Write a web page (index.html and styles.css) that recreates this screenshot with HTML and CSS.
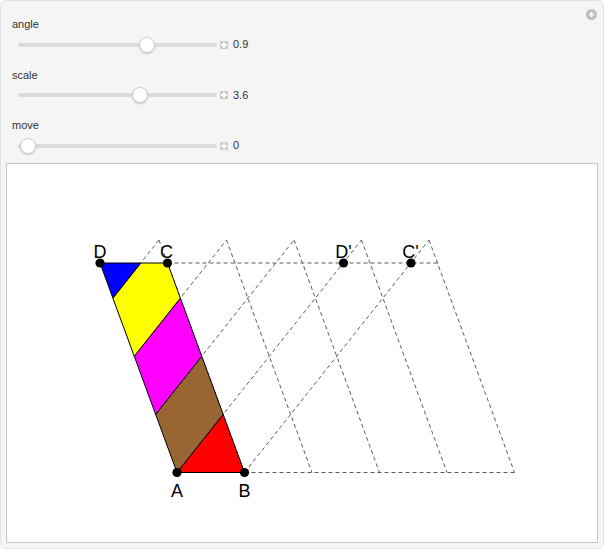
FILE: index.html
```html
<!DOCTYPE html>
<html>
<head>
<meta charset="utf-8">
<link rel="stylesheet" href="styles.css">
</head>
<body>
<div class="panel">
  <div class="corner-btn">
    <svg width="11" height="11" viewBox="0 0 11 11"><circle cx="5.5" cy="5.5" r="5.5" fill="#bdbdbd"/><path d="M5.5 2.8v5.4M2.8 5.5h5.4" stroke="#fff" stroke-width="1.6"/></svg>
  </div>
  <div class="controls">
    <div class="control">
      <div class="control-label">angle</div>
      <div class="slider-row">
        <div class="track"><div class="thumb" style="left:121px"></div></div>
        <span class="plus"></span>
        <span class="value">0.9</span>
      </div>
    </div>
    <div class="control">
      <div class="control-label">scale</div>
      <div class="slider-row">
        <div class="track"><div class="thumb" style="left:114px"></div></div>
        <span class="plus"></span>
        <span class="value">3.6</span>
      </div>
    </div>
    <div class="control">
      <div class="control-label">move</div>
      <div class="slider-row">
        <div class="track"><div class="thumb" style="left:2px"></div></div>
        <span class="plus"></span>
        <span class="value">0</span>
      </div>
    </div>
  </div>
  <div class="canvas">
    <svg class="diagram" width="590" height="378" viewBox="7 164 590 378">
      <g class="dash">
        <line x1="167.5" y1="263" x2="437.5" y2="263"/>
        <line x1="244.5" y1="472.5" x2="514.5" y2="472.5"/>
        <line x1="159" y1="240" x2="244.5" y2="472.5"/>
        <line x1="226.5" y1="240" x2="312" y2="472.5"/>
        <line x1="294" y1="240" x2="379.5" y2="472.5"/>
        <line x1="361.5" y1="240" x2="447" y2="472.5"/>
        <line x1="429" y1="240" x2="514.5" y2="472.5"/>
        <line x1="244.5" y1="472.5" x2="429" y2="240"/>
        <line x1="177" y1="472.5" x2="361.5" y2="240"/>
        <line x1="155.63" y1="414.37" x2="294" y2="240"/>
        <line x1="134.26" y1="356.24" x2="226.5" y2="240"/>
        <line x1="112.89" y1="298.11" x2="159" y2="240"/>
      </g>
      <g class="pieces">
        <polygon fill="#ff0000" points="177,472.5 244.5,472.5 223.13,414.37"/>
        <polygon fill="#996633" points="177,472.5 223.13,414.37 201.76,356.24 155.63,414.37"/>
        <polygon fill="#ff00ff" points="155.63,414.37 201.76,356.24 180.39,298.11 134.26,356.24"/>
        <polygon fill="#ffff00" points="134.26,356.24 180.39,298.11 167.5,263 140.75,263 112.89,298.11"/>
        <polygon fill="#0000ff" points="112.89,298.11 140.75,263 100,263"/>
      </g>
      <g class="pts">
        <circle cx="177" cy="472.5" r="4.6"/>
        <circle cx="244.5" cy="472.5" r="4.6"/>
        <circle cx="167.5" cy="263" r="4.6"/>
        <circle cx="100" cy="263" r="4.6"/>
        <circle cx="343.5" cy="263" r="4.6"/>
        <circle cx="411" cy="263" r="4.6"/>
      </g>
      <g class="lbl">
        <text x="100" y="258">D</text>
        <text x="166.5" y="258">C</text>
        <text x="343.5" y="258">D'</text>
        <text x="410.5" y="258">C'</text>
        <text x="177" y="497">A</text>
        <text x="244.5" y="497">B</text>
      </g>
    </svg>
  </div>
</div>
</body>
</html>
```

FILE: styles.css
```css
body {
  margin: 0;
  background: #ffffff;
  font-family: "Liberation Sans", Arial, sans-serif;
}

.panel {
  position: relative;
  width: 604px;
  height: 549px;
  box-sizing: border-box;
  border: 1px solid #e2e2e2;
  border-radius: 6px;
  background: #f5f5f5;
  padding: 17px 5px 5px 5px;
  display: flex;
  flex-direction: column;
}

.corner-btn {
  position: absolute;
  top: 8px;
  right: 6px;
  width: 11px;
  height: 11px;
}

.corner-btn svg {
  display: block;
}

.controls {
  padding-left: 6px;
}

.control {
  margin-bottom: 16px;
}

.control:last-child {
  margin-bottom: 9.5px;
}

.control-label {
  font-size: 11px;
  line-height: 13px;
  color: #333333;
}

.slider-row {
  display: flex;
  align-items: center;
  height: 16px;
  margin-top: 5.5px;
  padding-left: 6px;
}

.track {
  position: relative;
  width: 199px;
  height: 4px;
  border-radius: 2px;
  background: #dcdcdc;
}

.thumb {
  position: absolute;
  top: -6px;
  width: 16px;
  height: 16px;
  box-sizing: border-box;
  border-radius: 50%;
  background: #ffffff;
  border: 1px solid #d0d0d0;
  box-shadow: 0 1px 2px rgba(0, 0, 0, 0.18);
}

.plus {
  position: relative;
  width: 8px;
  height: 8px;
  margin-left: 3px;
  background: #cacaca;
  border-radius: 1px;
}

.plus::before,
.plus::after {
  content: "";
  position: absolute;
  background: #ffffff;
}

.plus::before {
  left: 3px;
  top: 1px;
  width: 2px;
  height: 6px;
}

.plus::after {
  left: 1px;
  top: 3px;
  width: 6px;
  height: 2px;
}

.value {
  margin-left: 5px;
  font-size: 11px;
  line-height: 13px;
  color: #333333;
}

.canvas {
  height: 380px;
  box-sizing: border-box;
  border: 1px solid #c6c6c6;
  background: #ffffff;
}

.diagram {
  display: block;
}

.dash line {
  stroke: #4a4a4a;
  stroke-width: 0.9;
  stroke-dasharray: 4 3;
  fill: none;
}

.pieces polygon {
  stroke: #000000;
  stroke-width: 1;
  stroke-linejoin: round;
}

.pts circle {
  fill: #000000;
}

.lbl text {
  font-family: "Liberation Sans", Arial, sans-serif;
  font-size: 18px;
  text-anchor: middle;
  fill: #000000;
}
```
